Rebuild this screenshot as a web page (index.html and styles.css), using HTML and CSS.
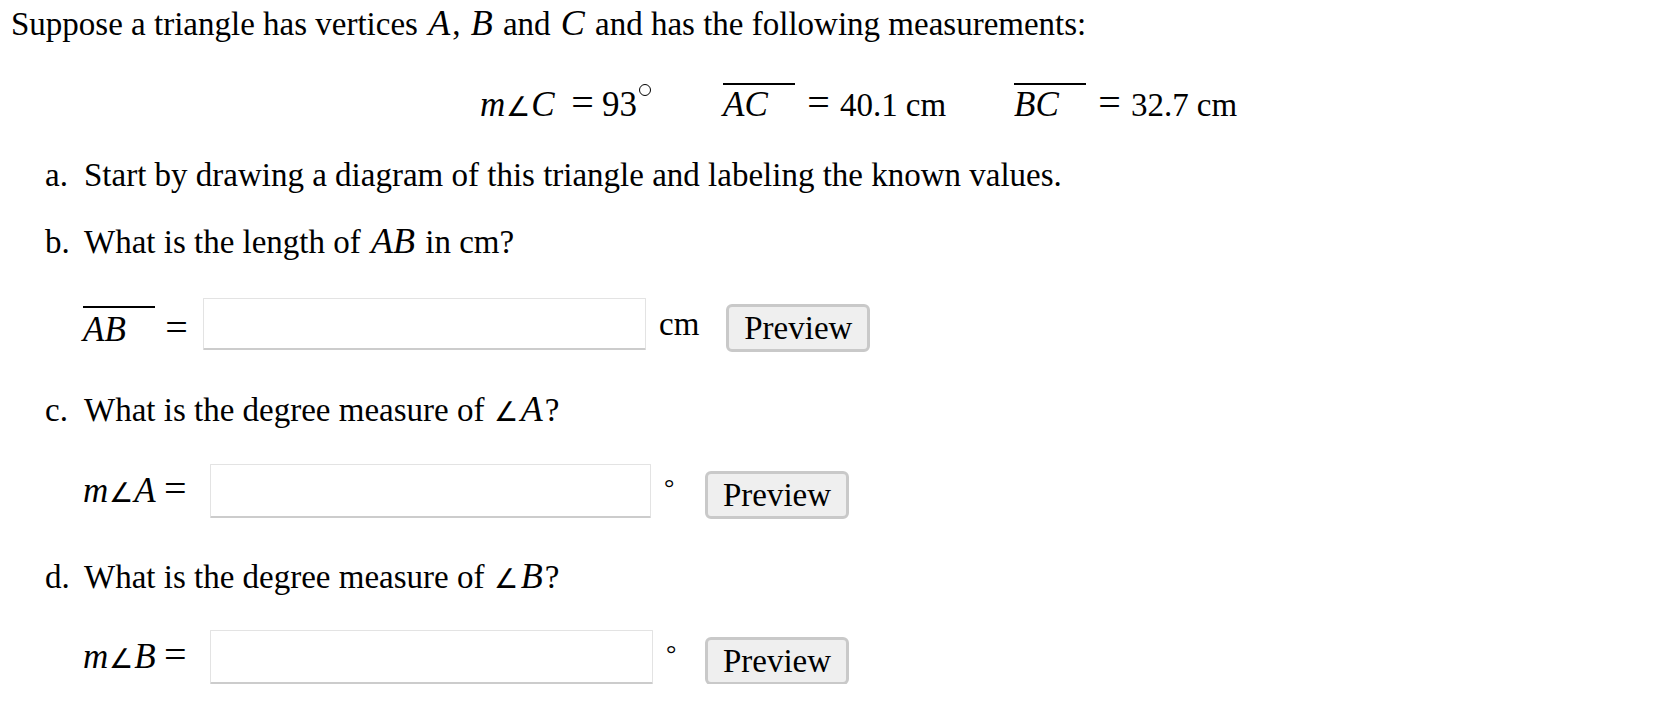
FILE: index.html
```html
<!DOCTYPE html>
<html lang="en">
<head>
<meta charset="utf-8">
<title>Triangle problem</title>
<link rel="stylesheet" href="styles.css">
</head>
<body>
<div class="page">
  <p class="intro">Suppose a triangle has vertices <i class="mi">A</i>, <i class="mi">B</i> and <i class="mi">C</i> and has the following measurements:</p>

  <div class="given">
    <span class="term t1"><span class="mc"><i>m</i><span class="ang">∠</span><i>C</i></span><span class="eq">=</span><span class="num">93</span><span class="circ"></span></span>
    <span class="term t2"><span class="ol"><i>AC</i></span><span class="eq">=</span><span class="num">40.1</span><span class="unit-m">cm</span></span>
    <span class="term t3"><span class="ol"><i>BC</i></span><span class="eq">=</span><span class="num">32.7</span><span class="unit-m">cm</span></span>
  </div>

  <div class="q qa"><span class="lbl">a.</span><span>Start by drawing a diagram of this triangle and labeling the known values.</span></div>
  <div class="q qb"><span class="lbl">b.</span><span>What is the length of <i class="mi">AB</i> in cm?</span></div>

  <div class="ans ans-ab">
    <span class="mlabel lab-ab"><span class="ol"><i>AB</i></span><span class="eq">=</span></span>
    <input class="box box-ab" type="text" aria-label="AB">
    <span class="unit">cm</span>
    <button class="prev prev-ab" type="button">Preview</button>
  </div>

  <div class="q qc"><span class="lbl">c.</span><span>What is the degree measure of <span class="ang">∠</span><i class="mi">A</i>?</span></div>

  <div class="ans ans-a">
    <span class="mlabel"><i>m</i><span class="ang">∠</span><i>A</i><span class="eq">=</span></span>
    <input class="box box-a" type="text" aria-label="angle A">
    <span class="deg">°</span>
    <button class="prev" type="button">Preview</button>
  </div>

  <div class="q qd"><span class="lbl">d.</span><span>What is the degree measure of <span class="ang">∠</span><i class="mi">B</i>?</span></div>

  <div class="ans ans-b">
    <span class="mlabel"><i>m</i><span class="ang">∠</span><i>B</i><span class="eq">=</span></span>
    <input class="box box-b" type="text" aria-label="angle B">
    <span class="deg">°</span>
    <button class="prev" type="button">Preview</button>
  </div>
</div>
</body>
</html>
```

FILE: styles.css
```css
html, body {
  margin: 0;
  padding: 0;
  background: #ffffff;
}

.page {
  font-family: "Liberation Serif", "Times New Roman", serif;
  font-size: 33px;
  line-height: 40px;
  color: #000;
  padding: 4px 0 0 11px;
}

.intro {
  margin: 0;
}

/* inline math letters */
.mi {
  font-size: 36px;
  line-height: 1;
  margin: 0 2px;
}

.ang {
  font-family: "DejaVu Sans", "Liberation Serif", sans-serif;
  font-size: 27px;
  font-style: normal;
  font-weight: 300;
  line-height: 1;
  margin: 0 1px;
}

/* given measurements line */
.given {
  display: flex;
  align-items: baseline;
  height: 40px;
  margin-top: 39px;
  padding-left: 469px;
  white-space: nowrap;
  font-size: 35px;
}

.term {
  display: flex;
  align-items: baseline;
  flex: none;
}

.t1 { width: 243px; }
.t2 { width: 291px; }

.mc {
  display: flex;
  align-items: baseline;
  width: 91px;
}

.eq {
  font-size: 40px;
  line-height: 36px;
  width: 23px;
  text-align: center;
}

.t1 .eq { margin-right: 8px; }
.t2 .eq, .t3 .eq { margin: 0 10px 0 12px; }

.unit-m {
  margin-left: 8px;
}

.t2 .num, .t3 .num, .t2 .unit-m, .t3 .unit-m {
  font-size: 33px;
}

.circ {
  display: inline-block;
  box-sizing: border-box;
  width: 12px;
  height: 12px;
  border: 1.5px solid #000;
  border-radius: 50%;
  align-self: flex-start;
  margin: -1px 0 0 2px;
}

.ol {
  box-sizing: border-box;
  width: 72px;
  border-top: 2px solid #000;
  padding-top: 2px;
  line-height: 36px;
}

/* questions */
.q {
  display: flex;
  padding-left: 34px;
}

.lbl {
  width: 39px;
  flex: none;
}

.qa { margin-top: 32px; }
.qb { margin-top: 27px; }
.qc { margin-top: 40px; }
.qd { margin-top: 39px; }

/* answer rows */
.ans {
  display: flex;
  align-items: center;
  padding-left: 72px;
}

.ans-ab { margin-top: 36px; height: 52px; }
.ans-a { margin-top: 34px; height: 54px; }
.ans-b { margin-top: 33px; height: 54px; }

.mlabel {
  display: flex;
  align-items: baseline;
  white-space: nowrap;
  flex: none;
  width: 127px;
  font-size: 35px;
}

.mlabel .eq {
  margin-left: 8px;
}

.lab-ab {
  width: 120px;
  align-self: flex-start;
  margin-top: 8px;
}

.lab-ab .ol {
  padding-top: 4px;
}

.lab-ab .eq {
  margin-left: 10px;
}

.box {
  box-sizing: border-box;
  height: 100%;
  border: 1px solid #e3e3e3;
  border-bottom: 2px solid #cccccc;
  border-radius: 1px;
  background: #fff;
  font: inherit;
  padding: 0 8px;
  outline: none;
  flex: none;
}

.box-ab { width: 443px; }
.box-a { width: 441px; }
.box-b { width: 443px; }

.unit {
  margin-left: 13px;
}

.deg {
  font-size: 26px;
  align-self: flex-start;
  line-height: 36px;
  margin: 6px 0 0 13px;
  width: 12px;
}

.prev {
  box-sizing: border-box;
  font-family: "Liberation Serif", "Times New Roman", serif;
  font-size: 33px;
  line-height: 38px;
  height: 48px;
  width: 144px;
  padding: 0;
  margin: 7px 0 0 29px;
  background: #efefef;
  border: 3px solid #c9c9c9;
  border-radius: 6px;
  color: #000;
  flex: none;
}

.box-b ~ .prev { margin-left: 27px; }

.prev-ab {
  margin: 8px 0 0 27px;
}
```
